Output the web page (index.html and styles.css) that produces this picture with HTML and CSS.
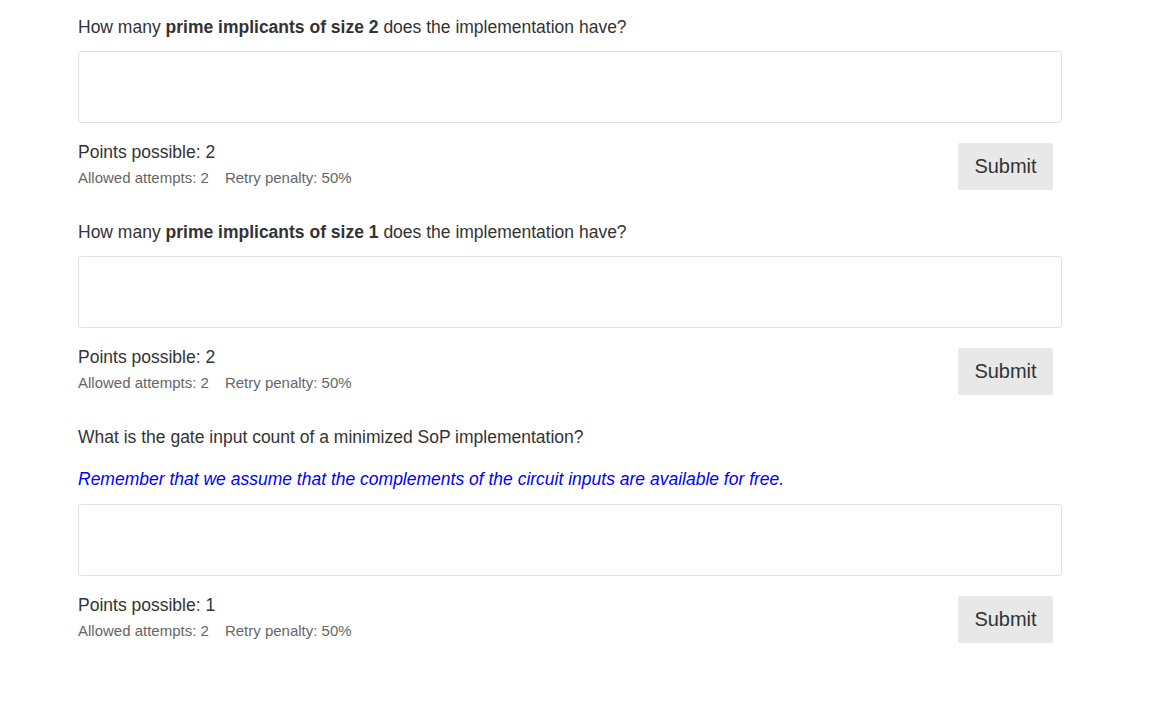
FILE: index.html
```html
<!DOCTYPE html>
<html>
<head>
<meta charset="utf-8">
<link rel="stylesheet" href="styles.css">
</head>
<body>
<div class="page">
  <div class="problem">
    <p class="question">How many <b>prime implicants of size 2</b> does the implementation have?</p>
    <div class="answer"></div>
    <div class="footer">
      <div class="meta">
        <div class="points">Points possible: 2</div>
        <div class="attempts"><span>Allowed attempts: 2</span><span>Retry penalty: 50%</span></div>
      </div>
      <button class="submit">Submit</button>
    </div>
  </div>
  <div class="problem">
    <p class="question">How many <b>prime implicants of size 1</b> does the implementation have?</p>
    <div class="answer"></div>
    <div class="footer">
      <div class="meta">
        <div class="points">Points possible: 2</div>
        <div class="attempts"><span>Allowed attempts: 2</span><span>Retry penalty: 50%</span></div>
      </div>
      <button class="submit">Submit</button>
    </div>
  </div>
  <div class="problem">
    <p class="question">What is the gate input count of a minimized SoP implementation?</p>
    <p class="note">Remember that we assume that the complements of the circuit inputs are available for free.</p>
    <div class="answer"></div>
    <div class="footer">
      <div class="meta">
        <div class="points">Points possible: 1</div>
        <div class="attempts"><span>Allowed attempts: 2</span><span>Retry penalty: 50%</span></div>
      </div>
      <button class="submit">Submit</button>
    </div>
  </div>
</div>
</body>
</html>
```
FILE: styles.css
```css
html, body {
  margin: 0;
  padding: 0;
  background: #fff;
}
body {
  font-family: "Liberation Sans", Arial, sans-serif;
  color: #333;
}
.page {
  width: 984px;
  margin-left: 78px;
  padding-top: 15px;
}
.problem {
  margin-bottom: 30px;
}
.question {
  margin: 0 0 11px;
  font-size: 17.5px;
  line-height: 25px;
}
.question b {
  font-weight: bold;
}
.note {
  margin: 17px 0 12px;
  font-size: 17.5px;
  line-height: 25px;
  font-style: italic;
  color: #0000ff;
}
.answer {
  height: 72px;
  box-sizing: border-box;
  border: 1px solid #e2e2e2;
  border-radius: 3px;
}
.footer {
  margin-top: 20px;
  display: flex;
  justify-content: space-between;
  align-items: flex-start;
}
.points {
  font-size: 17.5px;
  line-height: 18px;
  color: #333;
}
.attempts {
  margin-top: 9px;
  font-size: 15px;
  line-height: 16px;
  color: #666;
  display: flex;
  gap: 16px;
}
.submit {
  margin-right: 9px;
  width: 95px;
  height: 47px;
  border: none;
  border-radius: 2px;
  background: #e8e8e8;
  color: #333;
  font-family: "Liberation Sans", Arial, sans-serif;
  font-size: 20px;
  padding: 0;
}
```
